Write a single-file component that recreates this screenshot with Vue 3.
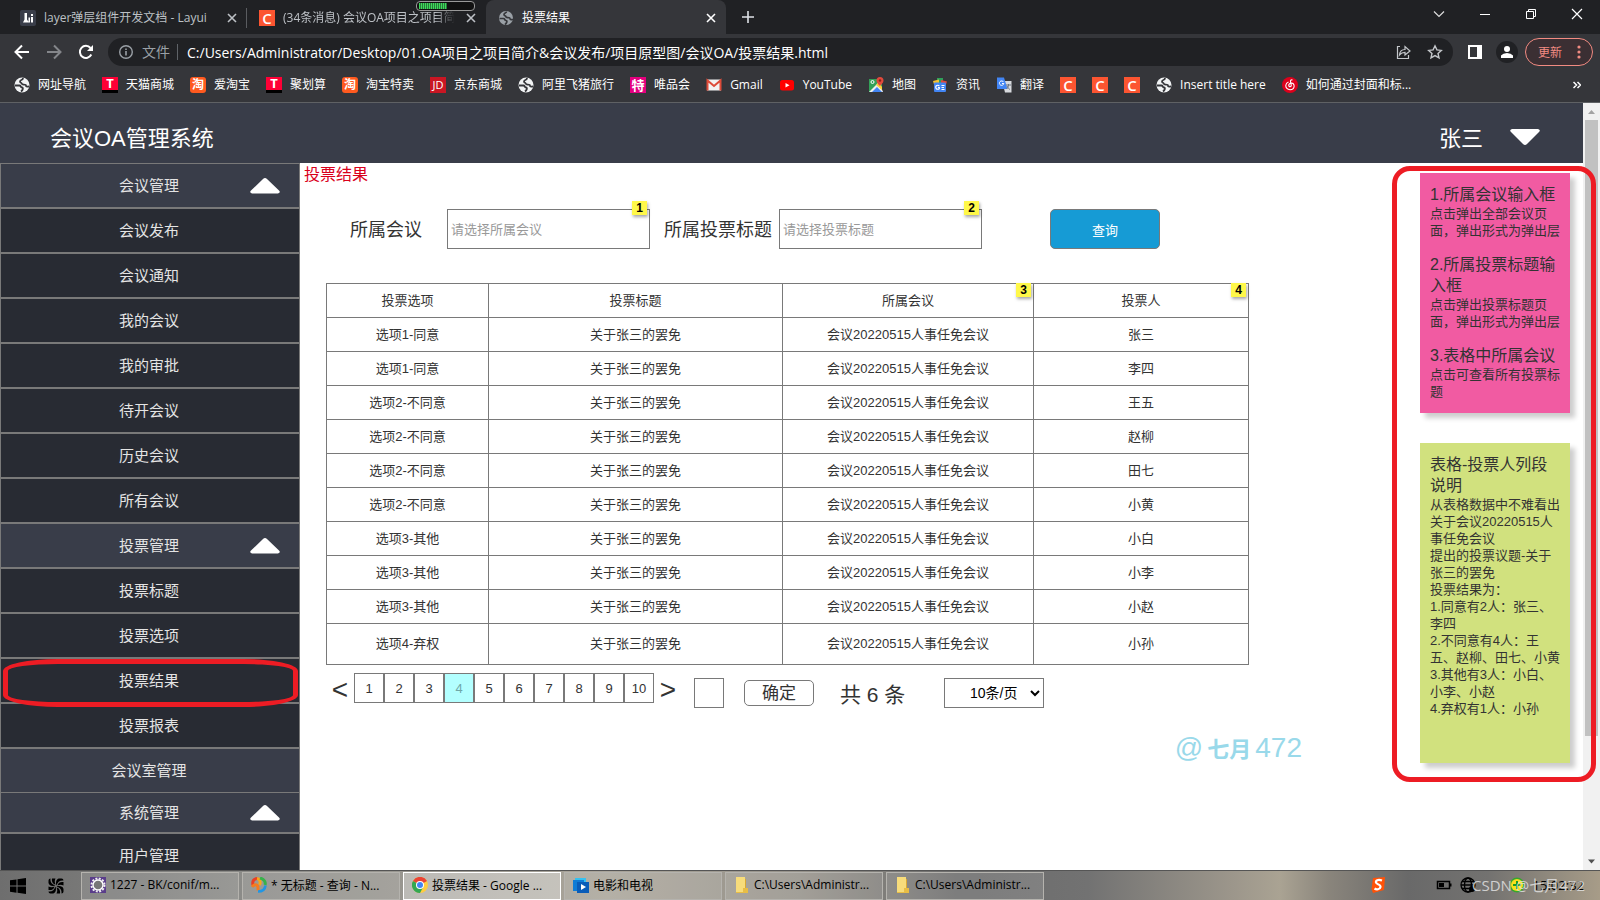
<template>
  <div class="screen">

    <!-- 浏览器标签栏 -->
    <div class="tab-strip">
      <div v-for="tab in tabs" :key="tab.title" class="tab" :class="{ active: tab.active }">
        <span v-if="tab.icon === 'layui'" class="fav fav-layui">
          <svg viewBox="0 0 16 16" width="16" height="16"><path d="M4.500 3h2.500v6.500l2 3H3l1.500-3z M8.500 7.500H10v5H8.500z M11 7h2v5.500h-2z M11 4h2v2h-2z" fill="#fff" /></svg>
        </span>
        <span v-else-if="tab.icon === 'csdn'" class="fav fav-c">C</span>
        <svg v-else class="fav" viewBox="0 0 16 16"><circle cx="8" cy="8" r="7" fill="#9aa0a6" /><path d="M1.500 8.500h4c1.500 0 1 2 2.500 2s1 2.500-1 4M8.500 1.500c0 2-2.500 1-2.500 3 0 1.500 2 1 2 2.500 0 1 4 0 4 1.500s1 1 3 1" fill="none" stroke="#35363a" stroke-width="1.700" /></svg>
        <span class="tab-title">{{ tab.title }}</span>
        <button class="tab-close" :aria-label="'关闭 ' + tab.title">
          <svg viewBox="0 0 10 10" width="10" height="10"><path d="M1 1l8 8M9 1l-8 8" stroke="currentColor" stroke-width="1.600" /></svg>
        </button>
      </div>
      <button class="new-tab" aria-label="新标签页">
        <svg viewBox="0 0 12 12" width="12" height="12"><path d="M6 0v12M0 6h12" stroke="#dee1e6" stroke-width="1.600" /></svg>
      </button>
      <div class="meter"><i v-for="n in 14" :key="n"></i></div>
      <div class="window-controls">
        <button aria-label="搜索标签页"><svg viewBox="0 0 12 12" width="12" height="12"><path d="M1 3.500l5 5 5-5" fill="none" stroke="#ddd" stroke-width="1.200" /></svg></button>
        <button aria-label="最小化"><svg viewBox="0 0 12 12" width="12" height="12"><path d="M1 6.500h10" stroke="#fff" /></svg></button>
        <button aria-label="还原"><svg viewBox="0 0 12 12" width="12" height="12"><path d="M1.500 3.500h7v7h-7zM3.500 3.500v-2h7v7h-2" fill="none" stroke="#fff" /></svg></button>
        <button aria-label="关闭"><svg viewBox="0 0 12 12" width="12" height="12"><path d="M1 1l10 10M11 1L1 11" stroke="#fff" stroke-width="1.200" /></svg></button>
      </div>
    </div>

    <!-- 地址栏 -->
    <div class="toolbar">
      <button class="nav-btn" aria-label="后退"><svg viewBox="0 0 16 16" width="16" height="16"><path d="M15 8H2M8 1.500L1.500 8 8 14.500" fill="none" stroke="#fff" stroke-width="2" /></svg></button>
      <button class="nav-btn" aria-label="前进"><svg viewBox="0 0 16 16" width="16" height="16"><path d="M1 8h13M8 1.500L14.500 8 8 14.500" fill="none" stroke="#84868a" stroke-width="2" /></svg></button>
      <button class="nav-btn" aria-label="刷新"><svg viewBox="0 0 16 16" width="16" height="16"><path d="M13.300 10.500A6 6 0 1 1 12.500 4" fill="none" stroke="#fff" stroke-width="2" /><path d="M15 1v6H9z" fill="#fff" /></svg></button>
      <div class="address">
        <svg viewBox="0 0 16 16" width="16" height="16"><circle cx="8" cy="8" r="6.300" fill="none" stroke="#9aa0a6" stroke-width="1.400" /><path d="M8 7v4.500M8 4.500V6" stroke="#9aa0a6" stroke-width="1.600" /></svg>
        <label class="scheme" for="url">文件</label>
        <input id="url" v-model="url" />
        <svg class="share" viewBox="0 0 16 16" width="16" height="16"><path d="M5 2.500H2.500v12h11V11M4.500 11c.3-4 2.500-5.500 5.500-5.500V2.500L15 7l-5 4V8.300C7.500 8.300 6 9 4.500 11z" fill="none" stroke="#c4c7cb" stroke-width="1.200" /></svg>
        <svg viewBox="0 0 16 16" width="16" height="16"><path d="M8 1.800l1.900 4.100 4.400.5-3.300 3 1 4.400L8 11.600l-4 2.200 1-4.400-3.300-3 4.400-.5z" fill="none" stroke="#c4c7cb" stroke-width="1.400" /></svg>
      </div>
      <svg class="side-icon" viewBox="0 0 14 14" width="14" height="14"><path d="M0 0h14v14H0zM2 2v10h7V2z" fill="#fff" fill-rule="evenodd" /></svg>
      <span class="avatar"><svg viewBox="0 0 12 12" width="12" height="12"><circle cx="6" cy="3" r="3" fill="#fff" /><path d="M0 12V9.500Q2 7 6 7t6 2.500V12z" fill="#fff" /></svg></span>
      <button class="update-btn">更新 <svg viewBox="0 0 4 16" width="4" height="16"><circle v-for="y in [3, 8, 13]" :key="y" cx="2" :cy="y" r="1.600" fill="#f28b82" /></svg></button>
    </div>

    <!-- 书签栏 -->
    <nav class="bookmarks">
      <a v-for="(b, i) in bookmarks" :key="i" href="#" :aria-label="b.text || 'CSDN'">
        <svg v-if="b.icon === 'globe'" class="fav" viewBox="0 0 16 16"><circle cx="8" cy="8" r="7.500" fill="#f1f3f4" /><path d="M1 8.500h4.500c1.500 0 1 2 2.500 2s1 2.500-1 4M9 1c0 2.500-3 1.500-3 3.500 0 1.500 2 1 2 2.500 0 1 4 0 4 1.500s1 1 3 1" fill="none" stroke="#35363a" stroke-width="1.800" /></svg>
        <svg v-else-if="b.icon === 'gmail'" class="fav" viewBox="0 0 16 16"><path d="M1 2.500h14v11H1z" fill="#f2f2f2" /><path d="M1.500 13.500V3.500L8 9l6.500-5.500v10" fill="none" stroke="#dd4b39" stroke-width="2" /></svg>
        <svg v-else-if="b.icon === 'youtube'" class="fav" viewBox="0 0 16 16"><rect x="1" y="3" width="14" height="10.500" rx="2.500" fill="#f00" /><path d="M6.500 6v4.500l4-2.300z" fill="#fff" /></svg>
        <svg v-else-if="b.icon === 'map'" class="fav" viewBox="0 0 16 16"><path d="M1 2h13v13H1z" fill="#34a058" /><path d="M1 15L11 5l4 10z" fill="#eee" /><path d="M4 15l5-5 5 5z" fill="#4285f4" /><path d="M8 8l3-3 3 5v3z" fill="#fbd13a" /><path d="M12 0a3.500 3.500 0 0 1 3.500 3.500C15.500 6 12 9 12 9S8.500 6 8.500 3.500A3.500 3.500 0 0 1 12 0z" fill="#e04a3c" /><circle cx="12" cy="3.500" r="1.200" fill="#8c2018" /><circle cx="4.500" cy="5" r="1.500" fill="none" stroke="#fff" /></svg>
        <svg v-else-if="b.icon === 'news'" class="fav" viewBox="0 0 16 16"><path d="M5 1h6v6H5z" fill="#2fa05a" /><path d="M1 4l6-1.500v5H2z" fill="#f6c32f" /><path d="M9 3l6 1.500-1 3H9z" fill="#e1483b" /><rect x="2" y="5.500" width="12" height="9.500" rx="1" fill="#4285f4" /><path d="M7.300 9a2 2 0 1 0 0 2.500V10.500H6M9.500 8.500h3M9.500 10.500h2.500M9.500 12.500h3" fill="none" stroke="#fff" stroke-width="1.200" /></svg>
        <svg v-else-if="b.icon === 'translate'" class="fav" viewBox="0 0 16 16"><path d="M6 4h9.500v11.500H9z" fill="#d8dade" /><path d="M1 .5h7l3.500 11.500H1z" fill="#4285f4" /><path d="M7.500 5a2.200 2.200 0 1 0 .3 1.500H6" fill="none" stroke="#fff" /><path d="M10 8h5M12.500 7v1c0 2-1 3-2 4M11 9c1 2 2 3 3 3.500" fill="none" stroke="#6c7480" /></svg>
        <svg v-else-if="b.icon === 'music'" class="fav" viewBox="0 0 16 16"><circle cx="8" cy="8" r="8" fill="#dd001b" /><path d="M10.500 3c-1.500-.5-2.300.5-2 1.800l.8 3.500c.2 1.500-2.300 2-2.500.3C6.500 6 11 5 12 8c.8 3-1.500 4.800-4 4.800S3.500 10.800 3.800 8.300C4 6.500 5 5.500 6.500 5" fill="none" stroke="#fff" stroke-width="1.100" /></svg>
        <span v-else class="fav" :class="'fav-' + b.icon">{{ b.glyph }}</span>
        <span v-if="b.text">{{ b.text }}</span>
      </a>
      <button class="more" aria-label="更多书签"><svg viewBox="0 0 8 8" width="8" height="8"><path d="M.500 1l3 3-3 3M4.500 1l3 3-3 3" fill="none" stroke="#fff" stroke-width="1.500" /></svg></button>
    </nav>

    <!-- 页面内容 -->
    <div class="viewport">
      <div class="page">
        <header class="page-header">
          <h1>会议OA管理系统</h1>
          <button class="user">
            张三
            <svg viewBox="0 0 30 16" width="30" height="16"><path d="M2 0h26q3 1 1 3L17 15q-2 2-4 0L1 3Q-1 1 2 0z" fill="#fff" /></svg>
          </button>
        </header>

        <div class="page-body">
          <nav class="side-menu">
            <a
              v-for="item in menu"
              :key="item.label"
              href="#"
              :class="{ group: item.group, flat: item.flat, short: item.short, marked: item.marked }"
            >
              <span>{{ item.label }}</span>
              <svg v-if="item.caret" viewBox="0 0 30 16" width="30" height="16"><path d="M2 15.500h26q3-1 1-3L17 1q-2-2-4 0L1 12.500q-2 2 1 3z" fill="#fff" /></svg>
            </a>
          </nav>

          <main class="content">
            <h2>投票结果</h2>

            <!-- 查询条件 -->
            <form class="search" @submit.prevent>
              <label class="first-label" for="meeting">所属会议</label>
              <div class="field">
                <input id="meeting" v-model="meeting" placeholder="请选择所属会议" />
                <span class="mark">1</span>
              </div>
              <label class="second-label" for="voteTitle">所属投票标题</label>
              <div class="field">
                <input id="voteTitle" v-model="voteTitle" placeholder="请选择投票标题" />
                <span class="mark">2</span>
              </div>
              <button class="query-btn">查询</button>
            </form>

            <!-- 投票结果表格 -->
            <table>
              <colgroup>
                <col class="col-option" /><col class="col-title" /><col class="col-meeting" /><col class="col-voter" />
              </colgroup>
              <thead>
                <tr>
                  <th>投票选项</th>
                  <th>投票标题</th>
                  <th>所属会议<span class="mark">3</span></th>
                  <th>投票人<span class="mark">4</span></th>
                </tr>
              </thead>
              <tbody>
                <tr v-for="row in rows" :key="row.voter">
                  <td>{{ row.option }}</td>
                  <td>关于张三的罢免</td>
                  <td>会议20220515人事任免会议</td>
                  <td>{{ row.voter }}</td>
                </tr>
              </tbody>
            </table>

            <!-- 分页 -->
            <div class="pager">
              <div class="pages">
                <button class="arrow" aria-label="上一页">&lt;</button>
                <button v-for="n in 10" :key="n" class="num" :class="{ current: n === page }" @click="page = n">{{ n }}</button>
                <button class="arrow" aria-label="下一页">&gt;</button>
              </div>
              <div class="pager-tools">
                <input v-model="jump" class="jump" aria-label="跳转页码" />
                <button class="ok-btn">确定</button>
                <span class="total">共 6 条</span>
                <select v-model="pageSize" aria-label="每页条数">
                  <option value="10">10条/页</option>
                  <option value="20">20条/页</option>
                </select>
              </div>
            </div>

            <p class="signature">@<span>七月</span>472</p>
          </main>

          <!-- 说明便签 -->
          <aside class="notes">
            <section class="note pink">
              <div v-for="n in pinkNotes" :key="n.title" class="note-block">
                <h3>{{ n.title }}</h3>
                <p>{{ n.text }}</p>
              </div>
            </section>
            <section class="note green">
              <h3>表格-投票人列段说明</h3>
              <p v-for="line in greenLines" :key="line">{{ line }}</p>
            </section>
          </aside>
        </div>
      </div>

      <div class="scrollbar">
        <svg viewBox="0 0 17 17" width="17" height="17"><path d="M5 11l3.500-4 3.500 4z" fill="#a3a3a3" /></svg>
        <div class="track"><div class="thumb"></div></div>
        <svg viewBox="0 0 17 17" width="17" height="17"><path d="M5 6.500l3.500 4 3.500-4z" fill="#505050" /></svg>
      </div>
    </div>

    <!-- 任务栏 -->
    <footer class="taskbar">
      <button class="start" aria-label="开始"><svg viewBox="0 0 16 16" width="16" height="16"><path d="M0 2.300L6.500 1.400v6.200H0zM7.500 1.200L16 0v7.600H7.500zM0 8.500h6.500v6.200L0 13.800zM7.500 8.500H16V16l-8.500-1.200z" fill="#000" /></svg></button>
      <button class="pin" aria-label="工具"><svg viewBox="0 0 16 16" width="16" height="16"><g v-for="a in [0, 90, 180, 270]" :key="a" :transform="`rotate(${a} 8 8)`"><path d="M7.500 7.500C5 8.500 1 8 .5 5V2.500Q.5.500 2.500.5C2 4 4 6.500 7.500 7.500z" fill="#000" /><path d="M7.500 6.500C4.500 6 3.500 3 4 .5h3.500C6.500 2.500 6.500 4.500 7.500 6.500z" fill="#000" /></g></svg></button>
      <button v-for="(t, i) in tasks" :key="i" class="task" :class="{ active: t.active }">
        <svg v-if="t.icon === 'eclipse'" viewBox="0 0 16 16" width="16" height="16"><rect width="16" height="16" fill="#5a3d8a" /><circle cx="8" cy="8" r="6.500" fill="none" stroke="#eee" stroke-width="2" stroke-dasharray="2 1.400" /><circle cx="8" cy="8" r="5" fill="#777" stroke="#fff" stroke-width="1.400" /></svg>
        <svg v-else-if="t.icon === 'navicat'" viewBox="0 0 16 16" width="16" height="16"><path d="M2 8C1 4 3 1.500 6.500 1.500" fill="none" stroke="#e83e25" stroke-width="3" /><path d="M6 1.500C9 2 10 5 8.500 8" fill="none" stroke="#f9a51a" stroke-width="3" /><path d="M9 1c4 1 6 4 5 7" fill="none" stroke="#36b24a" stroke-width="3" /><path d="M1 10c2-3 5-3 6 0v3.500" fill="none" stroke="#f47b20" stroke-width="3" /><path d="M7 14.500c4 0 7-2 7.500-6" fill="none" stroke="#2196e3" stroke-width="2.600" /></svg>
        <svg v-else-if="t.icon === 'chrome'" viewBox="0 0 16 16" width="16" height="16"><circle cx="8" cy="8" r="8" fill="#ffcd40" /><path d="M8 8L1 4a8 8 0 0 1 14 0z" fill="#ea4335" /><path d="M1 4a8 8 0 0 0 7 12l3.500-6.500L8 8z" fill="#34a853" /><circle cx="8" cy="8" r="4" fill="#fff" /><circle cx="8" cy="8" r="3" fill="#4285f4" /></svg>
        <svg v-else-if="t.icon === 'movie'" viewBox="0 0 16 16" width="16" height="16"><path d="M2 1h11v4H2z" fill="#35c1f1" /><path d="M0 3h11v11H0z" fill="#0f7cd6" /><path d="M4 5h12v11H4z" fill="#0a5cb8" /><path d="M8 7v6l5-3z" fill="#fff" /></svg>
        <svg v-else viewBox="0 0 16 16" width="16" height="16"><path d="M2 0h9v16H2z" fill="#f7dc7b" /><path d="M9 11h5v5H2v-1h7z" fill="#e8bd45" /><path d="M11 2h1v9h-1z" fill="#d9a833" /></svg>
        <span>{{ t.text }}</span>
      </button>
      <div class="tray">
        <svg class="sogou" viewBox="0 0 16 16" width="16" height="16"><path d="M3 1l12-1-1 13-11 3-1.500-4z" fill="#ff5208" /><path d="M12 3.500C8 2 5.500 3.500 6 5.500S11 7.500 10.500 10s-4 3-6 1.500" fill="none" stroke="#fff" stroke-width="2.200" /></svg>
        <svg viewBox="0 0 16 16" width="16" height="16"><path d="M1.500 4.500h12v7h-12z" fill="none" stroke="#000" stroke-width="1.500" /><path d="M3 6h5v4H3zM14 6.500h1.500v3H14z" /></svg>
        <svg viewBox="0 0 16 16" width="16" height="16"><g fill="none" stroke="#000" stroke-width="1.300"><circle cx="8" cy="8" r="7" /><ellipse cx="8" cy="8" rx="3.500" ry="7" /><path d="M1 8h14M2 4.500h12M2 11.500h8" /></g><circle cx="12" cy="12" r="3" /></svg>
        <svg class="shield" viewBox="0 0 16 16" width="16" height="16"><circle cx="8" cy="8" r="7.500" fill="#37a72e" /><circle cx="8" cy="8" r="6" fill="#f6df1e" /><path d="M8 4v8M4 8h8" stroke="#1d9a24" stroke-width="2" /></svg>
        <time>15:02:32</time>
        <span class="watermark">CSDN @七月472</span>
      </div>
    </footer>
  </div>
</template>

<script setup>
import { ref } from 'vue'

const url = ref('C:/Users/Administrator/Desktop/01.OA项目之项目简介&会议发布/项目原型图/会议OA/投票结果.html')
const meeting = ref('')
const voteTitle = ref('')
const jump = ref('')
const page = ref(4)
const pageSize = ref('10')

const tabs = [
  { title: 'layer弹层组件开发文档 - Layui', icon: 'layui' },
  { title: '(34条消息) 会议OA项目之项目简', icon: 'csdn' },
  { title: '投票结果', icon: 'globe', active: true }
]

const bookmarks = [
  { icon: 'globe', text: '网址导航' },
  { icon: 't', glyph: 'T', text: '天猫商城' },
  { icon: 'tao', glyph: '淘', text: '爱淘宝' },
  { icon: 't', glyph: 'T', text: '聚划算' },
  { icon: 'tao', glyph: '淘', text: '淘宝特卖' },
  { icon: 'jd', glyph: 'JD', text: '京东商城' },
  { icon: 'globe', text: '阿里飞猪旅行' },
  { icon: 'vip', glyph: '特', text: '唯品会' },
  { icon: 'gmail', text: 'Gmail' },
  { icon: 'youtube', text: 'YouTube' },
  { icon: 'map', text: '地图' },
  { icon: 'news', text: '资讯' },
  { icon: 'translate', text: '翻译' },
  { icon: 'c', glyph: 'C' },
  { icon: 'c', glyph: 'C' },
  { icon: 'c', glyph: 'C' },
  { icon: 'globe', text: 'Insert title here' },
  { icon: 'music', text: '如何通过封面和标...' }
]

const menu = [
  { label: '会议管理', group: true, caret: true },
  { label: '会议发布' },
  { label: '会议通知' },
  { label: '我的会议' },
  { label: '我的审批' },
  { label: '待开会议' },
  { label: '历史会议' },
  { label: '所有会议' },
  { label: '投票管理', group: true, caret: true },
  { label: '投票标题' },
  { label: '投票选项' },
  { label: '投票结果', marked: true },
  { label: '投票报表' },
  { label: '会议室管理', group: true, flat: true },
  { label: '系统管理', group: true, caret: true, short: true },
  { label: '用户管理' }
]

const rows = [
  { option: '选项1-同意', voter: '张三' },
  { option: '选项1-同意', voter: '李四' },
  { option: '选项2-不同意', voter: '王五' },
  { option: '选项2-不同意', voter: '赵柳' },
  { option: '选项2-不同意', voter: '田七' },
  { option: '选项2-不同意', voter: '小黄' },
  { option: '选项3-其他', voter: '小白' },
  { option: '选项3-其他', voter: '小李' },
  { option: '选项3-其他', voter: '小赵' },
  { option: '选项4-弃权', voter: '小孙' }
]

const pinkNotes = [
  { title: '1.所属会议输入框', text: '点击弹出全部会议页面，弹出形式为弹出层' },
  { title: '2.所属投票标题输入框', text: '点击弹出投票标题页面，弹出形式为弹出层' },
  { title: '3.表格中所属会议', text: '点击可查看所有投票标题' }
]

const greenLines = [
  '从表格数据中不难看出关于会议20220515人事任免会议',
  '提出的投票议题-关于张三的罢免',
  '投票结果为：',
  '1.同意有2人：张三、李四',
  '2.不同意有4人：王五、赵柳、田七、小黄',
  '3.其他有3人：小白、小李、小赵',
  '4.弃权有1人：小孙'
]

const tasks = [
  { icon: 'eclipse', text: '1227 - BK/conif/m...' },
  { icon: 'navicat', text: '* 无标题 - 查询 - N...' },
  { icon: 'chrome', text: '投票结果 - Google ...', active: true },
  { icon: 'movie', text: '电影和电视' },
  { icon: 'folder', text: 'C:\\Users\\Administr...' },
  { icon: 'folder', text: 'C:\\Users\\Administr...' }
]
</script>

<style>
body {
  margin: 0;
  overflow: hidden;
}
</style>

<style scoped>
* { box-sizing: border-box; }

.screen {
  display: flex;
  flex-direction: column;
  height: 100vh;
  overflow: hidden;
  font-family: "Open Sans", "Noto Sans CJK SC", sans-serif;
  font-size: 12px;
}

button, input, select {
  font-family: inherit;
  font-size: inherit;
  margin: 0;
  padding: 0;
}

button {
  border: none;
  background: none;
  color: inherit;
  cursor: pointer;
}

a { color: inherit; text-decoration: none; }

svg { display: block; flex-shrink: 0; }

h1, h2, h3, p { margin: 0; font-weight: 400; }

/* 标签栏 */
.tab-strip {
  position: relative;
  display: flex;
  height: 34px;
  padding-left: 8px;
  background: #202124;
  color: #bdc1c6;
}

.tab {
  position: relative;
  display: flex;
  align-items: center;
  width: 239px;
  padding: 1px 7px 0 12px;
  gap: 8px;
}

.tab:first-child::after {
  content: "";
  position: absolute;
  right: 0;
  top: 8px;
  width: 1px;
  height: 20px;
  background: #5a5c60;
}

.tab.active {
  width: 240px;
  background: #35363a;
  color: #fff;
  border-radius: 8px 8px 0 0;
}

.tab-title {
  flex: 1;
  overflow: hidden;
  white-space: nowrap;
  line-height: 18px;
}

.tab:nth-child(2) .tab-title {
  mask-image: linear-gradient(90deg, #000 88%, transparent);
}

.tab-close { padding: 3px; }

.fav {
  display: flex;
  align-items: center;
  justify-content: center;
  flex-shrink: 0;
  width: 16px;
  height: 16px;
  color: #fff;
  line-height: 16px;
}

.fav-layui { background: #393d49; border-radius: 2px; }
.fav-c { background: #fc5531; font-size: 15px; font-weight: 600; }
.fav-t { background: #ff0036; border-bottom: 3px solid #000; font-size: 13px; font-weight: 700; }
.fav-tao { background: #ff5a1f; border-radius: 3px; font-size: 12px; font-weight: 700; }
.fav-jd { background: #c91623; font-size: 11px; }
.fav-vip { background: #e4007f; font-size: 13px; font-weight: 700; }

.new-tab { padding: 0 16px; }

.meter {
  position: absolute;
  left: 416px;
  top: 1px;
  display: flex;
  gap: 1px;
  width: 59px;
  height: 10px;
  padding: 1px 2px;
  border: 1px solid #999;
  border-radius: 4px;
  background: #111;
}

.meter i { width: 1px; background: #3edb5a; box-shadow: 1px 0 #27793a; }

.window-controls {
  display: flex;
  margin-left: auto;
  height: 28px;
}

.window-controls button {
  display: flex;
  align-items: center;
  justify-content: center;
  width: 46px;
}

/* 工具栏 */
.toolbar {
  display: flex;
  align-items: center;
  height: 36px;
  padding: 0 7px 0 14px;
  background: #35363a;
}

.nav-btn { width: 16px; margin-right: 16px; }
.nav-btn:nth-child(3) { margin-right: 14px; }

.address {
  display: flex;
  align-items: center;
  flex: 1;
  height: 28px;
  padding: 0 10px;
  border-radius: 14px;
  background: #202124;
  color: #fff;
  font-size: 14px;
}

.scheme {
  padding: 0 7px 0 0;
  margin: 0 9px 0 8px;
  border-right: 1px solid #5f6368;
  color: #9aa0a6;
  line-height: 16px;
}

.address input {
  flex: 1;
  border: none;
  outline: none;
  background: transparent;
  color: #fff;
}

.share { margin-right: 16px; }
.side-icon { margin-left: 15px; }

.avatar {
  display: flex;
  align-items: center;
  justify-content: center;
  width: 22px;
  height: 22px;
  margin: 0 7px 0 14px;
  border-radius: 50%;
  background: #202124;
}

.update-btn {
  display: flex;
  align-items: center;
  gap: 15px;
  height: 28px;
  padding: 0 11px 0 12px;
  border: 1px solid #f28b82;
  border-radius: 14px;
  background: #3b2f33;
  color: #f28b82;
}

/* 书签 */
.bookmarks {
  display: flex;
  align-items: center;
  gap: 16px;
  height: 33px;
  padding: 0 19px 3px 14px;
  border-bottom: 1px solid #5f6164;
  background: #35363a;
  color: #fff;
  white-space: nowrap;
}

.bookmarks a { display: flex; align-items: center; gap: 8px; line-height: 18px; }
.more { margin-left: auto; }

/* 页面 */
.viewport {
  display: flex;
  flex: 1;
  min-height: 0;
  background: #fff;
  color: #333;
  font-family: "Liberation Sans", "Noto Sans CJK SC", sans-serif;
  font-size: 13px;
}

.page {
  display: flex;
  flex-direction: column;
  flex: 1;
  min-width: 0;
}

.page-header {
  display: flex;
  align-items: center;
  justify-content: space-between;
  flex-shrink: 0;
  height: 60px;
  padding: 12px 43px 0 50px;
  background: #393d49;
  color: #fff;
}

.page-header h1 { font-size: 22px; line-height: 30px; }

.user {
  display: flex;
  align-items: center;
  gap: 27px;
  font-size: 22px;
  line-height: 30px;
}

.user svg { margin-bottom: 5px; }

.page-body { display: flex; flex: 1; min-height: 0; }

/* 左侧菜单 */
.side-menu {
  width: 300px;
  flex-shrink: 0;
  overflow: hidden;
  font-size: 15px;
}

.side-menu a {
  position: relative;
  display: grid;
  grid-template-columns: 1fr auto 1fr;
  align-items: center;
  height: 45px;
  padding-right: 2px;
  border: 1px solid #797979;
  background: #282b33;
  color: #e4e4e4;
  line-height: 20px;
}

.side-menu a span { grid-column: 2; }
.side-menu a svg { justify-self: end; margin-right: 17px; }
.side-menu .group { background: #393d49; }
.side-menu .flat { height: 44px; border-bottom: none; }
.side-menu .short { height: 41px; }

.side-menu .marked::after {
  content: "";
  position: absolute;
  inset: 0 1px -5px 2px;
  border: 5px solid #ed1c24;
  border-radius: 55px / 12px;
  z-index: 2;
}

/* 主体 */
.content { flex: 1; min-width: 0; }

.content h2 {
  padding-left: 4px;
  color: #d9001b;
  font-size: 16px;
  line-height: 24px;
}

.search {
  display: flex;
  align-items: center;
  margin-top: 22px;
  padding-left: 50px;
}

.search label {
  padding-top: 2px;
  font-size: 18px;
  line-height: 24px;
  white-space: nowrap;
}

.first-label { width: 97px; }
.second-label { margin-left: 14px; width: 115px; }

.field { position: relative; width: 203px; height: 40px; }

.field input {
  width: 100%;
  height: 100%;
  padding: 0 3px;
  border: 1px solid #797979;
  background: #fff;
  color: #333;
}

.field input::placeholder { color: #999; }

.mark {
  position: absolute;
  right: 2px;
  top: -1px;
  width: 15px;
  height: 14px;
  background: #fff849;
  box-shadow: 1px 2px 3px rgba(0, 0, 0, 0.35);
  color: #000;
  font-size: 12px;
  font-weight: 700;
  line-height: 14px;
  text-align: center;
}

.field .mark { top: -8px; right: 3px; }

.query-btn {
  width: 110px;
  height: 40px;
  margin-left: 68px;
  border: 1px solid #797979;
  border-radius: 5px;
  background: #169bd5;
  color: #fff;
}

/* 表格 */
table {
  width: calc(100% - 197px);
  margin: 34px 0 0 26px;
  border-collapse: collapse;
  table-layout: fixed;
  text-align: center;
}

.col-option { width: 162px; }
.col-title { width: 294px; }
.col-meeting { width: 251px; }
.col-voter { width: 215px; }

th, td {
  position: relative;
  height: 34px;
  padding: 0;
  border: 1px solid #797979;
  font-weight: 400;
  line-height: 18px;
}

tbody tr:last-child td { height: 41px; }

/* 分页 */
.pager { display: flex; margin-top: 8px; padding-left: 26px; }
.pages { display: flex; }

.num {
  width: 30px;
  height: 30px;
  border: 1px solid #797979;
  background: #fff;
}

.num.current { background: #b3ffff; color: #6fa8a8; }

.arrow {
  width: 28px;
  height: 34px;
  font-size: 28px;
  line-height: 34px;
}

.pager-tools {
  display: flex;
  align-items: center;
  height: 30px;
  margin: 5px 0 0 12px;
}

.jump { width: 30px; height: 30px; border: 1px solid #797979; }

.ok-btn {
  width: 70px;
  height: 26px;
  margin: 0 26px 0 20px;
  padding-top: 2px;
  border: 1px solid #797979;
  border-radius: 5px;
  background: #fff;
  font-size: 17px;
  line-height: 22px;
}

.total {
  width: 104px;
  padding-top: 3px;
  font-size: 21px;
  line-height: 28px;
  white-space: nowrap;
}

.pager-tools select {
  width: 100px;
  height: 30px;
  padding-left: 21px;
  border: 1px solid #797979;
  border-radius: 0;
  background: #fff;
  color: #000;
  font-size: 14px;
}

.signature {
  margin: 23px 118px 0 0;
  color: #99d9ea;
  font-size: 28px;
  line-height: 34px;
  text-align: right;
}

.signature span { margin: 0 4px; font-size: 22px; font-weight: 700; }

/* 便签 */
.notes {
  position: relative;
  align-self: flex-start;
  width: 163px;
  padding: 10px 13px 12px 0;
}

.notes::after {
  content: "";
  position: absolute;
  inset: 3px -13px -7px -28px;
  border: 5px solid #ed1c24;
  border-radius: 18px;
  pointer-events: none;
  z-index: 3;
}

.note {
  min-height: 240px;
  padding: 11px 10px;
  box-shadow: 5px 5px 5px rgba(0, 0, 0, 0.2);
}

.note h3 { font-size: 16px; line-height: 21px; }
.note p { line-height: 17px; }
.note-block + .note-block { margin-top: 15px; }

.pink { background: #f15ba2; }
.green { margin-top: 30px; min-height: 320px; background: #d1e17e; }

/* 滚动条 */
.scrollbar {
  display: flex;
  flex-direction: column;
  width: 17px;
  background: #f1f1f1;
}

.track { flex: 1; padding: 0 2px; }
.thumb { height: 84%; background: #c1c1c1; }

/* 任务栏 */
.taskbar {
  display: flex;
  align-items: center;
  height: 30px;
  gap: 3px;
  border-top: 1px solid #555;
  background: linear-gradient(90deg, #6e6e6e 0, #8b8b88 15%, #aaa59a 38%, #96928a 50%, #6b6b6b 60%, #727272 68%, #9c968b 77%, #aaa393 80%, #8a857c 83%, #696969 88%, #737270 93%, #a79c88 100%);
  color: #000;
}

.start { padding: 0 12px 0 10px; }
.pin { margin-right: 14px; padding-left: 7px; }

.task {
  display: flex;
  align-items: center;
  gap: 4px;
  width: 158px;
  height: 28px;
  padding: 0 7px 2px 8px;
  border: 1px solid #b5b3ae;
  background: rgba(255, 255, 255, 0.12);
  white-space: nowrap;
}

.task.active { border: 1px solid #fff; background: rgba(255, 255, 255, 0.35); }

.tray {
  position: relative;
  display: flex;
  align-items: center;
  margin-left: auto;
  padding: 0 16px 2px 0;
  gap: 8px;
}

.tray time { font-size: 13px; }

.sogou { margin-right: 42px; }
.shield { margin-left: 25px; }

.watermark {
  position: absolute;
  right: 15px;
  color: rgba(225, 225, 225, 0.85);
  font-size: 15px;
  white-space: nowrap;
}
</style>
